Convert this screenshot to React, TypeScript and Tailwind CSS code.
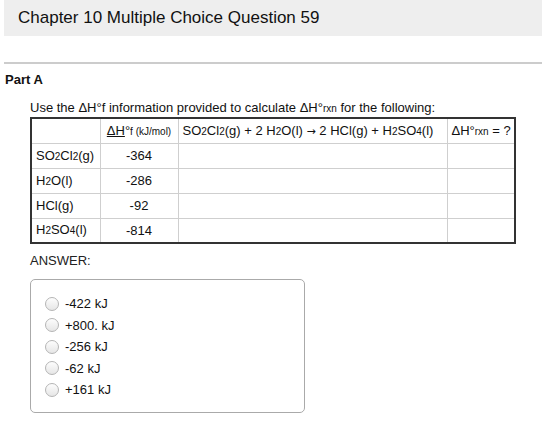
const Sub = ({ children }: { children: React.ReactNode }) => (
  <span className="text-[10px]">{children}</span>
);

const rows = [
  { name: <>SO<Sub>2</Sub>Cl<Sub>2</Sub>(g)</>, value: "-364" },
  { name: <>H<Sub>2</Sub>O(l)</>, value: "-286" },
  { name: <>HCl(g)</>, value: "-92" },
  { name: <>H<Sub>2</Sub>SO<Sub>4</Sub>(l)</>, value: "-814" },
];

const answers = ["-422 kJ", "+800. kJ", "-256 kJ", "-62 kJ", "+161 kJ"];

const cell = "h-[25px] whitespace-nowrap border border-[#cfcfcf] px-[4px] align-middle";

export default function App() {
  return (
    <div className="h-[422px] w-[542px] bg-white text-[#111] font-['Liberation_Sans',Arial,sans-serif]">
      <div className="ml-[4px] flex h-[36px] items-center bg-[#eeeeee] pl-[14px] text-[17px]">
        Chapter 10 Multiple Choice Question 59
      </div>
      <div className="ml-[4px] mt-[26px] h-[2px] bg-[#cccccc]" />
      <div className="ml-[5px] mt-[8px] text-[13px] font-bold leading-[16px]">Part A</div>
      <div className="ml-[30px] mt-[12px] text-[13px] leading-[15px]">
        Use the ΔH°f information provided to calculate ΔH°<Sub>rxn</Sub> for the following:
      </div>
      <table className="ml-[30px] mt-[1px] w-[486px] table-fixed border-collapse border-2 border-[#333] text-[13px] leading-[15px]">
        <colgroup>
          <col className="w-[69px]" />
          <col className="w-[78px]" />
          <col className="w-[269px]" />
          <col />
        </colgroup>
        <thead>
          <tr>
            <th className={`${cell} border-t-0 border-l-0`} />
            <th className={`${cell} border-t-0 px-[2px] text-center font-normal`}>
              <span className="underline">ΔH</span>°<span className="text-[10px]">f (kJ/mol)</span>
            </th>
            <th className={`${cell} border-t-0 text-left font-normal`}>
              SO<Sub>2</Sub>Cl<Sub>2</Sub>(g) + 2 H<Sub>2</Sub>O(l){" "}
              <span className="font-['DejaVu_Sans',sans-serif] text-[11px]">→</span> 2 HCl(g) + H<Sub>2</Sub>SO<Sub>4</Sub>(l)
            </th>
            <th className={`${cell} border-t-0 border-r-0 text-left font-normal`}>
              ΔH°<Sub>rxn</Sub> = ?
            </th>
          </tr>
        </thead>
        <tbody>
          {rows.map((r, i) => {
            const last = i === rows.length - 1 ? "border-b-0" : "";
            return (
              <tr key={i}>
                <td className={`${cell} border-l-0 ${last}`}>{r.name}</td>
                <td className={`${cell} text-center ${last}`}>{r.value}</td>
                <td className={`${cell} ${last}`} />
                <td className={`${cell} border-r-0 ${last}`} />
              </tr>
            );
          })}
        </tbody>
      </table>
      <div className="ml-[30px] mt-[9px] text-[13px] leading-[15px] text-[#222]">ANSWER:</div>
      <div className="ml-[30px] mt-[11px] flex h-[134px] w-[275px] flex-col gap-[6.5px] rounded-[5px] border border-[#aaaaaa] pl-[14px] pt-[16px]">
        {answers.map((a) => (
          <label key={a} className="flex items-center gap-[6px] text-[13px] leading-[15px]">
            <span className="h-[14px] w-[14px] rounded-full border border-[#b5b5b5] bg-gradient-to-b from-[#fdfdfd] to-[#e6e6e6]" />
            {a}
          </label>
        ))}
      </div>
    </div>
  );
}
